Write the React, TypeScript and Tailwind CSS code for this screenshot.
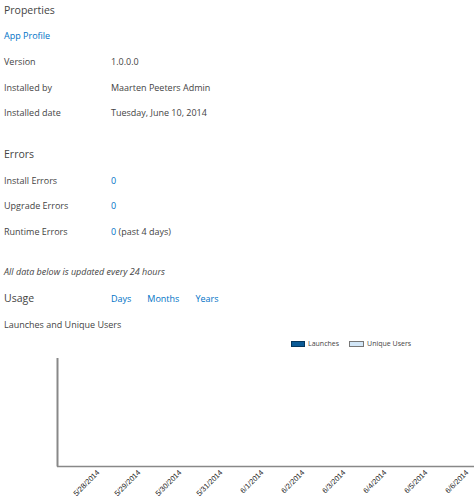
import React from "react";

const font = { fontFamily: '"Open Sans", "Noto Sans", sans-serif' };

const Row = ({ label, children }: { label: string; children: React.ReactNode }) => (
  <div className="flex h-[25.5px] items-center text-[9px] text-[#444]">
    <div className="w-[107px] shrink-0">{label}</div>
    <div>{children}</div>
  </div>
);

const Link = ({ children }: { children: React.ReactNode }) => (
  <span className="text-[#0072c6]">{children}</span>
);

const dates = [
  "5/28/2014",
  "5/29/2014",
  "5/30/2014",
  "5/31/2014",
  "6/1/2014",
  "6/2/2014",
  "6/3/2014",
  "6/4/2014",
  "6/5/2014",
  "6/6/2014",
];

const Chart = () => (
  <svg width="474" height="152" className="block">
    <line x1="57.5" y1="8" x2="57.5" y2="116.5" stroke="#888" strokeWidth="2" />
    <line x1="57" y1="116.5" x2="474" y2="116.5" stroke="#888" strokeWidth="1.5" />
    {dates.map((d, i) => {
      const x = 100 + i * 41;
      return (
        <text
          key={d}
          x={x}
          y={123}
          fontSize="7.5"
          fill="#222"
          textAnchor="end"
          fontFamily='"Liberation Sans", Arial, sans-serif'
          transform={`rotate(-45 ${x} 123)`}
        >
          {d}
        </text>
      );
    })}
  </svg>
);

export default function App() {
  return (
    <div className="w-[474px] h-[502px] bg-white pl-[4px] overflow-hidden" style={font}>
      <div className="h-[21px] flex items-center text-[10.5px] text-[#444]">Properties</div>
      <div className="mt-[2px]">
        <div className="flex h-[26px] items-center text-[9px]">
          <Link>App Profile</Link>
        </div>
        <Row label="Version">1.0.0.0</Row>
        <Row label="Installed by">Maarten Peeters Admin</Row>
        <Row label="Installed date">Tuesday, June 10, 2014</Row>
      </div>

      <div className="mt-[18px] h-[22px] flex items-center text-[10.5px] text-[#444]">Errors</div>
      <div className="mt-[2px]">
        <Row label="Install Errors">
          <Link>0</Link>
        </Row>
        <Row label="Upgrade Errors">
          <Link>0</Link>
        </Row>
        <Row label="Runtime Errors">
          <Link>0</Link> (past 4 days)
        </Row>
      </div>

      <div className="mt-[18px] h-[20px] flex items-center text-[9px] italic text-[#444]">
        All data below is updated every 24 hours
      </div>

      <div className="mt-[6px] flex h-[22px] items-center">
        <div className="w-[107px] shrink-0 text-[10.5px] text-[#444]">Usage</div>
        <div className="flex gap-[16px] text-[9px] text-[#0072c6]">
          <span>Days</span>
          <span>Months</span>
          <span>Years</span>
        </div>
      </div>

      <div className="mt-[4px] h-[22px] flex items-center text-[9px] text-[#444]">Launches and Unique Users</div>

      <div className="mt-[2px] h-[12px] flex items-center pl-[287px] text-[7px] text-[#444]">
        <span className="w-[14px] h-[6px] bg-[#0a5a96] border border-[#05365c]" />
        <span className="ml-[3px]">Launches</span>
        <span className="ml-[10px] w-[15px] h-[6px] bg-[#d2e6f7] border border-[#777]" />
        <span className="ml-[3px]">Unique Users</span>
      </div>

      <div className="-ml-[4px]">
        <Chart />
      </div>
    </div>
  );
}
